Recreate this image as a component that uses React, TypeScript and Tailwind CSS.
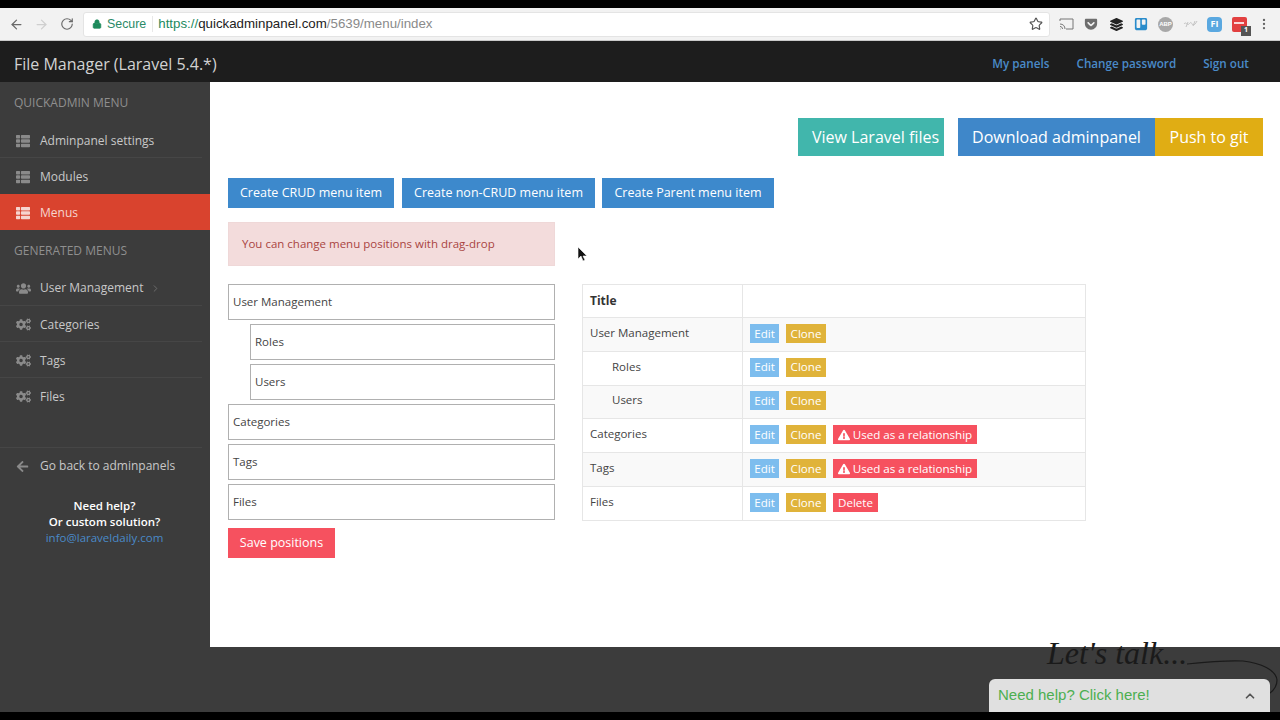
import { ArrowLeft, ArrowRight, RotateCw, Lock, Star, ChevronRight, ChevronUp, EllipsisVertical } from "lucide-react";
import { FaThList, FaUsers, FaCogs, FaArrowLeft, FaExclamationTriangle, FaGetPocket, FaTrello, FaLayerGroup } from "react-icons/fa";
import type { ReactNode } from "react";

const font = { fontFamily: '"Open Sans", sans-serif' };

function SideRow({ icon, label, active, chevron, flush }: { icon: ReactNode; label: string; active?: boolean; chevron?: boolean; flush?: boolean }) {
  return (
    <div className={`h-9 flex items-center pl-[16px] text-[12px] ${flush ? "" : "pt-[1px]"} ${active ? "bg-[#d9432e] text-[#f6d5cf]" : "text-[#c8c8c8]"}`}>
      <span className={`w-[24px] flex items-center ${active ? "text-[#f6d5cf]" : "text-[#8a8a8a]"}`}>{icon}</span>
      <span>{label}</span>
      {chevron && <ChevronRight size={11} className="ml-[7px] text-[#6f6f6f]" />}
    </div>
  );
}

const Divider = () => <div className="h-px -mt-px mr-[8px] bg-[#464646] relative" />;

const nested = [
  { name: "User Management", indent: false },
  { name: "Roles", indent: true },
  { name: "Users", indent: true },
  { name: "Categories", indent: false },
  { name: "Tags", indent: false },
  { name: "Files", indent: false },
];

const rows = [
  { name: "User Management", indent: false, extra: null },
  { name: "Roles", indent: true, extra: null },
  { name: "Users", indent: true, extra: null },
  { name: "Categories", indent: false, extra: "rel" },
  { name: "Tags", indent: false, extra: "rel" },
  { name: "Files", indent: false, extra: "del" },
];

export default function App() {
  return (
    <div className="w-[1280px] h-[720px] overflow-hidden relative bg-black flex flex-col" style={font}>
      <div className="h-2 shrink-0 bg-black" />

      {/* browser bar */}
      <div className="h-[33px] shrink-0 bg-[#f2f2f2] flex items-center pl-[9px] border-b border-[#c9c9c9]">
        <ArrowLeft size={15} className="text-[#6a6a6a]" />
        <ArrowRight size={15} className="ml-[10px] text-[#cfcfcf]" />
        <RotateCw size={14} className="ml-[11px] text-[#6a6a6a]" />
        <div className="ml-[9px] w-[967px] h-[25px] bg-white rounded-[3px] border border-[#e4e4e4] flex items-center pl-[8px]" style={{ fontFamily: '"Liberation Sans", sans-serif' }}>
          <Lock size={10} className="text-[#1d8a5c]" fill="#1d8a5c" />
          <span className="ml-[5px] text-[12.400px] text-[#2a8a68]">Secure</span>
          <span className="ml-[6px] h-4 w-px bg-[#e8e8e8]" />
          <span className="ml-[5px] text-[13.300px] text-[#1c8a5e]">https://</span>
          <span className="text-[13.300px] text-[#222]">quickadminpanel.com</span>
          <span className="text-[13.300px] text-[#8a8a8a]">/5639/menu/index</span>
          <Star size={14} className="ml-auto mr-[6px] text-[#555]" />
        </div>
        <div className="flex items-center ml-[9px]">
          <svg width="15" height="12" viewBox="0 0 15 12" fill="none" stroke="#777" strokeWidth="1">
            <path d="M1 3V1h13v10H7M1 6c3 0 5 2 5 5M1 8.500c1.500 0 2.500 1 2.500 2.500M1 11h.5" />
          </svg>
          <FaGetPocket size={14} className="ml-[10px] text-[#6e6e6e]" />
          <FaLayerGroup size={13} className="ml-[12px] text-[#222]" />
          <FaTrello size={14} className="ml-[11px] text-[#2a8ccb]" />
          <span className="ml-[10px] w-[15px] h-[15px] rounded-full bg-[#a8a8a8] text-white text-[6px] font-bold flex items-center justify-center" style={{ fontFamily: '"Liberation Sans", sans-serif' }}>ABP</span>
          <svg width="15" height="8" viewBox="0 0 15 8" fill="none" stroke="#c4c4c4" strokeWidth="1" className="ml-[10px]">
            <path d="M1 4c2-3 3 2 5 0s2-2 3 0 3 1 5-3M3 7l2-5M10 6l2-5" />
          </svg>
          <span className="ml-[9px] w-[15px] h-[15px] rounded-[4px] bg-[#5aa8e0] text-white text-[9px] font-bold flex items-center justify-center">FI</span>
          <span className="ml-[10px] relative w-[15px] h-[15px] bg-[#e24040] rounded-[2px]">
            <span className="absolute left-[2px] top-[5px] w-[10px] h-[2px] bg-white/80" />
            <span className="absolute -right-[4px] -bottom-[4px] w-[10px] h-[10px] bg-[#555] text-white text-[7px] font-bold flex items-center justify-center">1</span>
          </span>
          <EllipsisVertical size={14} className="ml-[10px] text-[#666]" />
        </div>
      </div>

      {/* top nav */}
      <div className="h-[41px] shrink-0 bg-[#1d1d1d] flex items-center pl-[14px] pr-[31px] pt-[4px]">
        <span className="text-[16px] text-[#d2d2d2]">File Manager (Laravel 5.4.*)</span>
        <div className="ml-auto flex gap-[27px] text-[11.700px] font-semibold text-[#4a8ac8]">
          <span>My panels</span>
          <span>Change password</span>
          <span>Sign out</span>
        </div>
      </div>

      {/* body */}
      <div className="h-[565px] shrink-0 flex">
        <aside className="w-[210px] shrink-0 bg-[#3c3c3c]">
          <div className="h-10 flex items-center pl-[14px] pt-[1px] text-[12px] text-[#8f8f8f]">QUICKADMIN MENU</div>
          <SideRow icon={<FaThList size={14} />} label="Adminpanel settings" />
          <Divider />
          <SideRow icon={<FaThList size={14} />} label="Modules" />
          <SideRow icon={<FaThList size={14} />} label="Menus" active />
          <div className="h-10 flex items-center pl-[14px] pt-[1px] text-[12px] text-[#8f8f8f]">GENERATED MENUS</div>
          <SideRow icon={<FaUsers size={15} />} label="User Management" chevron flush />
          <Divider />
          <SideRow icon={<FaCogs size={15} />} label="Categories" />
          <Divider />
          <SideRow icon={<FaCogs size={15} />} label="Tags" />
          <Divider />
          <SideRow icon={<FaCogs size={15} />} label="Files" />
          <div className="h-[33px]" />
          <div className="h-px mr-[8px] bg-[#464646]" />
          <SideRow icon={<FaArrowLeft size={13} />} label="Go back to adminpanels" flush />
          <div className="mt-[14px] text-center text-[11.500px] leading-4 font-semibold text-white pr-[1px]">
            <div>Need help?</div>
            <div>Or custom solution?</div>
            <div className="font-normal text-[#4a8ac8]">info@laraveldaily.com</div>
          </div>
        </aside>

        <main className="flex-1 bg-white pl-[18px] pr-[17px] pt-9 text-[11.500px] text-[#444]">
          <div className="flex justify-end text-[16px] text-white h-[38px]">
            <div className="w-[146px] bg-[#41b6ac] flex items-center pl-[14px]">View Laravel files</div>
            <div className="ml-[14px] w-[197px] bg-[#3f87c9] flex items-center justify-center">Download adminpanel</div>
            <div className="w-[108px] bg-[#e0ad14] flex items-center justify-center">Push to git</div>
          </div>

          <div className="mt-[22px] flex gap-2 text-[12.500px] text-white h-[30px]">
            <div className="w-[166px] pt-[1px] bg-[#3d89cc] flex items-center justify-center">Create CRUD menu item</div>
            <div className="w-[193px] pt-[1px] bg-[#3d89cc] flex items-center justify-center">Create non-CRUD menu item</div>
            <div className="w-[172px] pt-[1px] -ml-px bg-[#3d89cc] flex items-center justify-center">Create Parent menu item</div>
          </div>

          <div className="mt-[14px] w-[327px] h-11 bg-[#f3dcdc] border border-[#efd8d8] flex items-center pl-[13px] text-[#a94442]">
            You can change menu positions with drag-drop
          </div>

          <div className="mt-[18px] flex items-start gap-[27px]">
            <div className="w-[327px]">
              <div className="flex flex-col gap-1">
                {nested.map((n) => (
                  <div
                    key={n.name}
                    className={`h-9 border border-[#b0b0b0] flex items-center pl-[4px] bg-white ${n.indent ? "ml-[22px]" : ""}`}
                  >
                    {n.name}
                  </div>
                ))}
              </div>
              <div className="mt-2 w-[107px] h-[30px] pt-[1px] bg-[#f6515f] text-white text-[12.500px] flex items-center justify-center">
                Save positions
              </div>
            </div>

            <table className="w-[504px] border-collapse border border-[#e6e6e6] table-fixed">
              <tbody>
                <tr className="h-[33px]">
                  <td className="w-[160px] border border-[#e6e6e6] pl-[7px] text-[12px] font-bold text-[#333]">Title</td>
                  <td className="border border-[#e6e6e6]" />
                </tr>
                {rows.map((r, i) => (
                  <tr key={r.name} className={`h-[33.800px] ${i % 2 === 0 ? "bg-[#f9f9f9]" : "bg-white"}`}>
                    <td className={`border border-[#e6e6e6] pb-[4px] ${r.indent ? "pl-[29px]" : "pl-[7px]"}`}>{r.name}</td>
                    <td className="border border-[#e6e6e6] pl-[7px] pb-[2px]">
                      <div className="flex gap-[7px] text-white text-[11.600px]">
                        <span className="w-[29px] h-[19px] bg-[#7dbdee] flex items-center justify-center">Edit</span>
                        <span className="w-[40px] h-[19px] bg-[#e0b33a] flex items-center justify-center">Clone</span>
                        {r.extra === "rel" && (
                          <span className="w-[144px] h-[19px] bg-[#f6515f] flex items-center justify-center gap-[3px]">
                            <FaExclamationTriangle size={12} />
                            Used as a relationship
                          </span>
                        )}
                        {r.extra === "del" && (
                          <span className="w-[45px] h-[19px] bg-[#f6515f] flex items-center justify-center">Delete</span>
                        )}
                      </div>
                    </td>
                  </tr>
                ))}
              </tbody>
            </table>
          </div>
        </main>
      </div>

      {/* footer strip */}
      <div className="h-[65px] shrink-0 bg-[#3c3c3c]" />
      <div className="flex-1 bg-black" />

      {/* mouse cursor */}
      <svg width="12" height="17" viewBox="0 0 12 17" className="absolute left-[577px] top-[246px]">
        <path d="M1 1v12l3-3 2 5 2-1-2-4h4z" fill="#111" stroke="#fff" strokeWidth="0.6" />
      </svg>

      {/* chat widget */}
      <div
        className="absolute left-[1047px] top-[628px] text-[32px] leading-[50px] italic text-[#1a1a1a]"
        style={{ fontFamily: '"Liberation Serif", serif' }}
      >
        Let's talk...
      </div>
      <svg width="94" height="42" viewBox="0 0 94 42" fill="none" stroke="#1a1a1a" strokeWidth="1.2" className="absolute left-[1186px] top-[655px]">
        <path d="M1 9C20 7 40 5 57 6C75 8 90 15 91 25C91 30 88 35 84 38" />
      </svg>
      <div className="absolute left-[989px] top-[679px] w-[281px] h-[33px] bg-[#e0e0e0] rounded-t-[6px] flex items-center pl-[9px] pr-[13px]">
        <span className="text-[15px] text-[#4caf50]" style={{ fontFamily: '"Liberation Sans", sans-serif' }}>Need help? Click here!</span>
        <ChevronUp size={14} strokeWidth={3} className="ml-auto text-[#555]" />
      </div>
    </div>
  );
}
